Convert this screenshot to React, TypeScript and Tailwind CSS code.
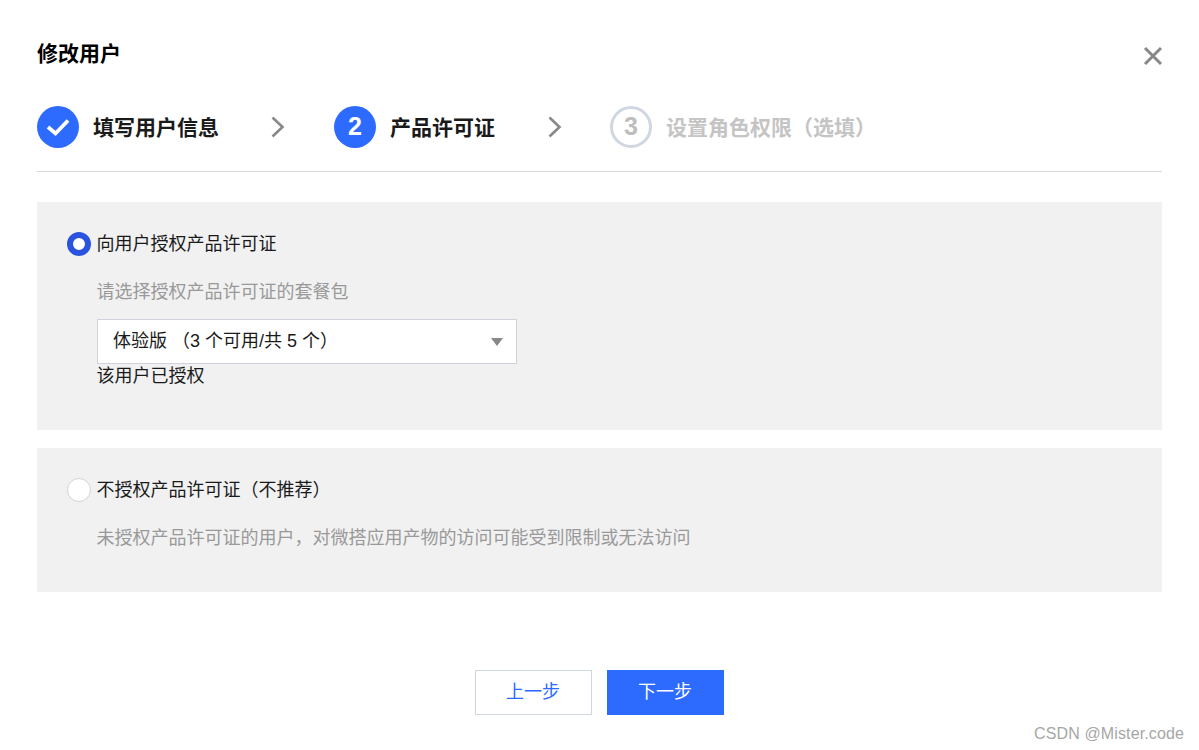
import React from "react";

function Chevron() {
  return (
    <svg width="16" height="22" viewBox="0 0 16 22" fill="none" className="block">
      <path d="M2.5 1.5 L12.5 11 L2.5 20.5" stroke="#888888" strokeWidth="2.6" />
    </svg>
  );
}

export default function App() {
  return (
    <div className="relative h-[750px] w-[1199px] overflow-hidden bg-white px-[37px] font-['Liberation_Sans','Noto_Sans_CJK_SC',sans-serif] text-[18px] text-[#1a1a1a]">
      <div className="flex h-[106px] items-start justify-between">
        <h1 className="mt-[39px] text-[21px] leading-[30px] font-bold text-black">修改用户</h1>
        <svg width="20" height="20" viewBox="0 0 20 20" fill="none" className="mt-[46px] mr-[-1px]">
          <path d="M2 2 L18 18 M18 2 L2 18" stroke="#888888" strokeWidth="3" />
        </svg>
      </div>

      <div className="flex h-[42px] items-center">
        <div className="flex h-[42px] w-[42px] items-center justify-center rounded-full bg-[#2d6bff]">
          <svg width="24" height="20" viewBox="0 0 24 20" fill="none">
            <path d="M2 10 L9.5 16.5 L22 3.5" stroke="white" strokeWidth="3.8" />
          </svg>
        </div>
        <span className="mt-[2px] ml-[14px] w-[126px] text-[21px] leading-[30px] font-bold whitespace-nowrap">填写用户信息</span>
        <div className="ml-[51px]"><Chevron /></div>
        <div className="ml-[48px] flex h-[42px] w-[42px] items-center justify-center rounded-full bg-[#2d6bff] text-[25px] font-bold text-white">2</div>
        <span className="mt-[2px] ml-[14px] w-[105px] text-[21px] leading-[30px] font-bold whitespace-nowrap">产品许可证</span>
        <div className="ml-[52px]"><Chevron /></div>
        <div className="ml-[47px] flex h-[42px] w-[42px] items-center justify-center rounded-full border-[3px] border-[#d0d6e2] text-[25px] font-bold text-[#bdbdbd]">3</div>
        <span className="mt-[2px] ml-[14px] text-[21px] leading-[30px] font-bold whitespace-nowrap text-[#c4c4c4]">设置角色权限（选填）</span>
      </div>

      <div className="mt-[23px] h-px bg-[#d9d9d9]" />

      <section className="mt-[30px] h-[228px] bg-[#f1f1f2] pt-[30px] pl-[30px]">
        <div className="flex h-[24px] items-center">
          <span className="h-[24px] w-[24px] rounded-full border-[6px] border-[#2a53df] bg-white" />
          <span className="ml-[5.5px] leading-[24px] font-normal whitespace-nowrap">向用户授权产品许可证</span>
        </div>
        <p className="mt-[24px] ml-[29.5px] leading-[24px] text-[#999999]">请选择授权产品许可证的套餐包</p>
        <div className="mt-[15px] ml-[30px] flex h-[45px] w-[420px] items-center justify-between border border-[#d0d3dc] bg-white pr-[13px] pl-[15px]">
          <span className="whitespace-nowrap">体验版 （3 个可用/共 5 个）</span>
          <span className="h-0 w-0 border-x-[6px] border-t-[8px] border-x-transparent border-t-[#888888]" />
        </div>
        <p className="ml-[29.5px] leading-[24px]">该用户已授权</p>
      </section>

      <section className="mt-[18px] h-[144px] bg-[#f1f1f2] pt-[30px] pl-[30px]">
        <div className="flex h-[24px] items-center">
          <span className="h-[24px] w-[24px] rounded-full border border-[#d0d3dc] bg-white" />
          <span className="ml-[5.5px] leading-[24px] whitespace-nowrap">不授权产品许可证（不推荐）</span>
        </div>
        <p className="mt-[24px] ml-[29.5px] leading-[24px] whitespace-nowrap text-[#999999]">未授权产品许可证的用户，对微搭应用产物的访问可能受到限制或无法访问</p>
      </section>

      <div className="mt-[78px] flex justify-center gap-[15px] pr-[1px]">
        <button className="h-[45px] w-[117px] border border-[#d0d6e2] bg-white text-[18px] text-[#2d6bff]">上一步</button>
        <button className="h-[45px] w-[117px] bg-[#2d6bff] text-[18px] text-white">下一步</button>
      </div>

      <div className="absolute right-[15px] bottom-[6px] text-[16px] leading-[20px] tracking-[0.12px] text-[#a6a6a6]">CSDN @Mister.code</div>
    </div>
  );
}
